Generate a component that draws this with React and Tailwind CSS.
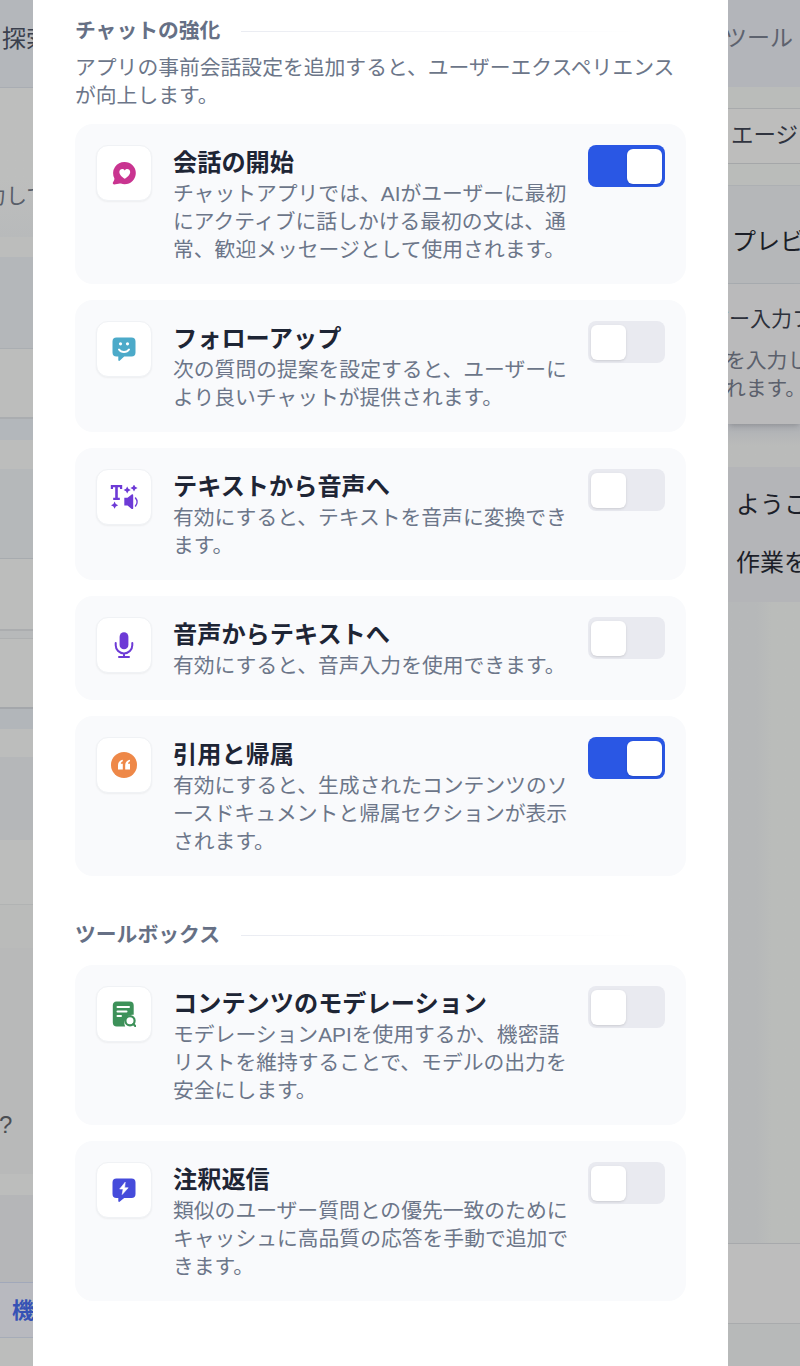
import { useState } from "react";

const ChatHeartIcon = () => (
  <svg viewBox="0 0 24 24" className="size-[26px]">
    <path
      d="M12.6 1.8a10.3 10.3 0 1 1 0 20.6c-1.2 0-2.4-.2-3.4-.6-.4-.1-.7-.1-1 0-1.700.4-3.600.7-5.300.7-1 0-1.600-1-1.100-1.800.7-1.100 1.200-2.200 1.300-3 .1-.5 0-.9-.2-1.300a10.3 10.3 0 0 1 9.700-14.600Z"
      fill="#c93490"
    />
    <path
      d="M12.700 17.300c-2.100-1.300-5-3.500-5-6.200 0-2.800 3.400-3.700 5-1.500 1.600-2.200 5-1.300 5 1.500 0 2.700-2.900 4.900-5 6.200Z"
      fill="#fff"
    />
  </svg>
);

const SmileChatIcon = () => (
  <svg viewBox="0 0 24 24" className="size-[24px]">
    <path
      d="M4.500.5h15A4 4 0 0 1 23.500 4.500v11a4 4 0 0 1-4 4h-7.300l-4.300 4.100c-.7.600-1.600.2-1.600-.7v-3.400H4.500a4 4 0 0 1-4-4v-11a4 4 0 0 1 4-4Z"
      fill="#4caac9"
    />
    <circle cx="8.500" cy="6.800" r="1.600" fill="#fff" />
    <circle cx="15.500" cy="6.800" r="1.600" fill="#fff" />
    <path d="M7 12.500c2.200 3.300 7.800 3.300 10 0" fill="none" stroke="#fff" strokeWidth="2" strokeLinecap="round" />
  </svg>
);

const TextToSpeechIcon = () => (
  <svg viewBox="0 0 28 24" className="h-[24px] w-[28px]" fill="#6d3ad6">
    <path d="M.8 0h11.400v4H10V2.300H7.800v10.400h2V15H3.200v-2.300h2V2.300H3V4H.8V0Z" />
    <path d="m17.200 1.400 1.200 2.400 2.400 1.200-2.400 1.200-1.200 2.400-1.200-2.400-2.400-1.200 2.400-1.200 1.200-2.400ZM24-.6l1.200 2.400L27.600 3l-2.400 1.200L24 6.600l-1.200-2.400L20.400 3l2.400-1.200L24-.6ZM4.600 16.600l1.200 2.400 2.400 1.200-2.400 1.200-1.200 2.400-1.200-2.400L1 20.200 3.400 19l1.200-2.400Z" />
    <path d="M14.300 12.800h3.200l4.200-3.300c.6-.5 1.500-.1 1.500.7v13c0 .8-.9 1.200-1.500.7l-4.200-3.300h-3.200V12.800Z" />
    <path d="M25.500 13c2 2.300 2 5.700 0 8" fill="none" stroke="#6d3ad6" strokeWidth="1.500" strokeLinecap="round" />
  </svg>
);

const MicIcon = () => (
  <svg viewBox="0 0 24 28" className="h-[28px] w-[24px]" fill="none" stroke="#6d3ad6" strokeWidth="2" strokeLinecap="round">
    <rect x="7.600" y="1.300" width="8.800" height="17" rx="4.400" fill="#6d3ad6" stroke="none" />
    <path d="M3.700 12v2.200a8.300 8.300 0 0 0 16.600 0V12M12 22.500V26M7 26h10" />
  </svg>
);

const QuoteIcon = () => (
  <svg viewBox="0 0 26 26" className="size-[26px]">
    <circle cx="13" cy="13" r="13" fill="#ee8848" />
    <path
      d="M11.800 7.800v1.500c-1.200.4-1.900 1.300-2 2.500h2v5.700H7v-4.300c0-2.900 1.800-4.900 4.800-5.400ZM19 7.800v1.500c-1.200.4-1.900 1.300-2 2.500h2v5.700h-4.800v-4.300c0-2.900 1.800-4.900 4.800-5.400Z"
      fill="#fff"
    />
  </svg>
);

const FileSearchIcon = () => (
  <svg viewBox="0 0 24 26" className="h-[26px] w-[24px]">
    <path
      d="M4.500.5h13.200a4 4 0 0 1 4 4v9.300a8.300 8.300 0 0 0-8.500 11.700H4.800A4 4 0 0 1 .8 21.500v-17a4 4 0 0 1 3.700-4Z"
      fill="#3d9159"
    />
    <path d="M5.500 6h11.500M5.500 10.500h9M5.500 15h3.500" stroke="#fff" strokeWidth="2" strokeLinecap="round" />
    <circle cx="18" cy="19.700" r="4.600" fill="none" stroke="#3d9159" strokeWidth="2.200" />
    <path d="m21.300 23 2.200 2.200" stroke="#3d9159" strokeWidth="2.200" strokeLinecap="round" />
  </svg>
);

const BoltChatIcon = () => (
  <svg viewBox="0 0 24 24" className="size-[24px]">
    <path
      d="M4.500.5h15A4 4 0 0 1 23.500 4.500v11.500a4 4 0 0 1-4 4h-7.300l-4.300 3.600c-.7.600-1.600.2-1.600-.7V20H4.500a4 4 0 0 1-4-4V4.500a4 4 0 0 1 4-4Z"
      fill="#454bdb"
    />
    <path d="M13.200 4.200 7.700 11h3.400l-.9 5.500 6-6.700h-3.600l.6-5.600Z" fill="#fff" stroke="#fff" strokeWidth=".6" strokeLinejoin="round" />
  </svg>
);

const chatFeatures = [
  {
    key: "opener",
    title: "会話の開始",
    description: "チャットアプリでは、AIがユーザーに最初\nにアクティブに話しかける最初の文は、通\n常、歓迎メッセージとして使用されます。",
    icon: <ChatHeartIcon />,
  },
  {
    key: "followUp",
    title: "フォローアップ",
    description: "次の質問の提案を設定すると、ユーザーに\nより良いチャットが提供されます。",
    icon: <SmileChatIcon />,
  },
  {
    key: "textToSpeech",
    title: "テキストから音声へ",
    description: "有効にすると、テキストを音声に変換でき\nます。",
    icon: <TextToSpeechIcon />,
  },
  {
    key: "speechToText",
    title: "音声からテキストへ",
    description: "有効にすると、音声入力を使用できます。",
    icon: <MicIcon />,
  },
  {
    key: "citation",
    title: "引用と帰属",
    description: "有効にすると、生成されたコンテンツのソ\nースドキュメントと帰属セクションが表示\nされます。",
    icon: <QuoteIcon />,
  },
];

const toolboxFeatures = [
  {
    key: "moderation",
    title: "コンテンツのモデレーション",
    description: "モデレーションAPIを使用するか、機密語\nリストを維持することで、モデルの出力を\n安全にします。",
    icon: <FileSearchIcon />,
  },
  {
    key: "annotation",
    title: "注釈返信",
    description: "類似のユーザー質問との優先一致のために\nキャッシュに高品質の応答を手動で追加で\nきます。",
    icon: <BoltChatIcon />,
  },
];

const Switch = ({ checked, onChange, label }) => (
  <button
    type="button"
    role="switch"
    aria-checked={checked}
    aria-label={label}
    onClick={onChange}
    className={`flex h-[42px] w-[77px] shrink-0 items-center rounded-lg px-[3px] ${
      checked ? "justify-end bg-[#2a57e4]" : "justify-start bg-[#e9eaf0]"
    }`}
  >
    <span className="size-[35px] rounded-[6px] bg-white shadow-sm" />
  </button>
);

const FeatureCard = ({ feature, checked, onToggle }) => (
  <div className="flex items-start rounded-[18px] bg-[#f9fafc] px-[21px] pt-[21px] pb-5">
    <div className="flex size-[56px] shrink-0 items-center justify-center rounded-[12px] border border-[#f0f2f5] bg-white shadow-xs">
      {feature.icon}
    </div>
    <div className="mt-px ml-[21px] min-w-0 flex-1">
      <h3 className="text-[24.2px] leading-[34px] font-bold whitespace-nowrap text-[#1e2535]">{feature.title}</h3>
      <p className="text-[20.8px] leading-[28px] whitespace-pre text-[#6c7689]">{feature.description}</p>
    </div>
    <Switch checked={checked} onChange={onToggle} label={feature.title} />
  </div>
);

const SectionTitle = ({ children }) => (
  <div className="flex h-[28px] items-center">
    <h2 className="text-[20.8px] font-bold text-[#667085]">{children}</h2>
    <div className="ml-[21px] h-px flex-1 bg-linear-to-r from-[#eaecf2] to-white to-90%" />
  </div>
);

// Page behind the dialog, left edge
const LeftBackdrop = () => (
  <div className="flex w-[33px] shrink-0 flex-col overflow-hidden bg-[#bcbdbc] whitespace-nowrap">
    <div className="flex h-[88px] items-center border-b border-[#a9adb3] bg-[#b4b7bb] pb-[10px] pl-[2px] text-[24px] text-[#3b404d]">探索</div>
    <div className="flex h-[149px] items-center bg-linear-to-b from-[#bdbebd] from-60% to-[#b8babb] pt-[66px] text-[21px] text-[#585e69]">
      <span className="-ml-[15px]">力して</span>
    </div>
    <div className="h-[20px]" />
    <div className="h-[92px] border-b border-[#aaaeb2] bg-[#b4b7ba]" />
    <div className="h-[70px] border-b-2 border-[#aaadb0]" />
    <div className="h-[21px] bg-[#b3b7bb]" />
    <div className="h-[29px]" />
    <div className="h-[90px] border-b border-[#a7abaf] bg-[#b5b8ba]" />
    <div className="h-[72px] border-b-2 border-[#abadaf]" />
    <div className="h-[8px] border-b border-[#aeb0b1] bg-[#b7b9ba]" />
    <div className="h-[70px] border-b-2 border-[#a4a7ab]" />
    <div className="h-[20px] bg-[#b2b6ba]" />
    <div className="h-[28px]" />
    <div className="h-[83px] bg-[#b5b7b9]" />
    <div className="h-[65px] border-b border-[#b1b3b3]" />
    <div className="h-[43px] bg-[#babbba]" />
    <div className="flex h-[226px] items-center bg-[#b8b9b9] pt-[128px] text-[24px] text-[#4b4e53]">
      <span className="-ml-px">?</span>
    </div>
    <div className="h-[21px]" />
    <div className="h-[88px] border-b border-[#a1a8ba] bg-[#b5b6b8]" />
    <div className="flex h-[55px] items-center border-b border-[#a6acb8] bg-[#b8b9bf] pl-[12px] text-[22px] font-bold text-[#3652b5]">機能</div>
  </div>
);

// Page behind the dialog, right edge
const RightBackdrop = () => (
  <div className="flex w-[72px] shrink-0 flex-col overflow-hidden bg-[#babcba] whitespace-nowrap">
    <div className="flex h-[87px] items-center bg-[#b3b5ba] pb-[10px] text-[23px] text-[#5d626e]">
      <span className="-ml-[4px]">ツール</span>
    </div>
    <div className="h-[22px] border-b border-[#a8aaac]" />
    <div className="flex h-[55px] items-center border-b border-[#a5a7a9] bg-[#bdbdbc] pl-[3px] text-[22.5px] text-[#30343f]">エージェント</div>
    <div className="h-[22px] border-b border-[#adb0b3]" />
    <div className="flex h-[98px] items-center border-b border-[#a7abaf] bg-[#b5b7b9] pt-[14px] pl-[4px] text-[24px] text-[#1b1e27]">プレビュー</div>
    <div className="z-10 flex h-[140px] flex-col bg-[#bababb] pt-[18px] shadow-md">
      <span className="-ml-[20px] text-[21px] leading-[34px] text-[#2d313b]">ザー入力フィールド</span>
      <span className="mt-[11px] -ml-[3px] text-[20.8px] leading-[28px] whitespace-pre text-[#5b606c]">{"を入力して\nれます。"}</span>
    </div>
    <div className="h-[43px] bg-linear-to-b from-[#aeb0b5] to-[#babbba] to-50%" />
    <div className="flex h-[135px] flex-col bg-[#b4b5b8] pt-[9px] pl-[8px] text-[24px] leading-[58px] text-[#1c1f29]">
      <span>ようこそ</span>
      <span>作業を</span>
    </div>
    <div className="h-[642px] border-b border-[#a7a9ac] bg-linear-to-r from-[#b6b8b9] from-40% to-[#babcba] to-60%" />
    <div className="h-[80px] border-b border-[#a9abad] bg-[#bdbdbd]" />
    <div className="flex-1 bg-[#b7b9b9]" />
  </div>
);

const App = () => {
  const [enabled, setEnabled] = useState({ opener: true, citation: true });

  const toggle = (key) => setEnabled({ ...enabled, [key]: !enabled[key] });

  const renderCards = (features) =>
    features.map((feature) => (
      <FeatureCard
        key={feature.key}
        feature={feature}
        checked={!!enabled[feature.key]}
        onToggle={() => toggle(feature.key)}
      />
    ));

  return (
    <div
      lang="ja"
      className="flex h-[1366px] w-[800px] overflow-hidden font-['Liberation_Sans','Noto_Sans_CJK_JP',sans-serif]"
    >
      <LeftBackdrop />
      <main className="z-20 w-[695px] shrink-0 bg-white pt-[17px] pr-[42px] pl-[42px]">
        <section>
          <SectionTitle>チャットの強化</SectionTitle>
          <p className="mt-[9px] text-[20.8px] leading-[28px] whitespace-pre text-[#6c7689]">
            {"アプリの事前会話設定を追加すると、ユーザーエクスペリエンス\nが向上します。"}
          </p>
          <div className="mt-[14px] flex flex-col gap-4">{renderCards(chatFeatures)}</div>
        </section>
        <section className="mt-[45px]">
          <SectionTitle>ツールボックス</SectionTitle>
          <div className="mt-4 flex flex-col gap-4">{renderCards(toolboxFeatures)}</div>
        </section>
      </main>
      <RightBackdrop />
    </div>
  );
};

export default App;
